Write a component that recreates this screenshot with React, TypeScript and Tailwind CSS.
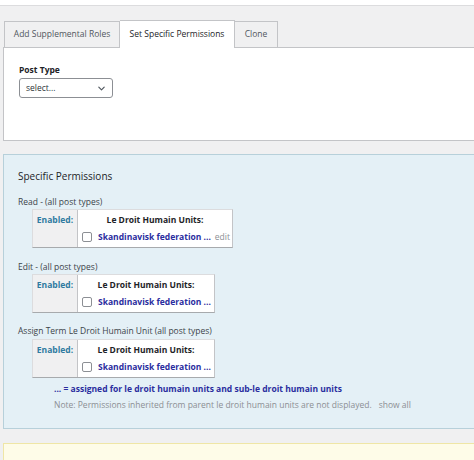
const font = { fontFamily: '"Open Sans", "Noto Sans", "Liberation Sans", sans-serif' };

function PermTable({ width, edit }: { width: string; edit?: boolean }) {
  return (
    <div
      className={`ml-[14px] flex h-[39px] ${width} border border-[#dcdcde] border-b-[#a7aaad] border-r-[#c3c4c7] bg-white`}
    >
      <div className="w-[45px] shrink-0 border-r border-[#c3c4c7] bg-[#f0f0f1] pt-[3px] text-center text-[8.5px] leading-[13px] font-bold text-[#2e7aa0]">
        Enabled:
      </div>
      <div className="flex flex-1 flex-col">
        <div className="pt-[3px] text-center text-[8.5px] leading-[13px] font-bold text-[#1d2327]">
          Le Droit Humain Units:
        </div>
        <div className="mt-[4px] flex items-center pl-[4px]">
          <span className="h-[10px] w-[10px] shrink-0 rounded-[2px] border border-[#8c8f94] bg-white" />
          <span className="ml-[6px] text-[8.5px] leading-[13px] font-bold whitespace-nowrap text-[#2a2d9e]">
            Skandinavisk federation ...
          </span>
          {edit && <span className="ml-[4px] text-[8.5px] leading-[13px] text-[#8c8f94]">edit</span>}
        </div>
      </div>
    </div>
  );
}

export default function App() {
  return (
    <div className="h-[460px] w-[474px] overflow-hidden bg-[#f0f0f1]" style={font}>
      {/* top strip */}
      <div className="h-[6px] border-b border-[#dcdcde] bg-white" />

      {/* tabs */}
      <div className="mt-[14px] flex h-[27px] items-end pl-[4px] text-[8.5px]">
        <div className="flex h-[26px] w-[116px] items-center justify-center border border-b-0 border-[#c3c4c7] bg-[#f0f0f1] text-[#50575e]">
          Add Supplemental Roles
        </div>
        <div className="relative -mb-px flex h-[28px] w-[115px] items-center justify-center border border-b-0 border-l-0 border-[#c3c4c7] bg-white text-[#1d2327]">
          Set Specific Permissions
        </div>
        <div className="flex h-[26px] w-[43px] items-center justify-center border border-b-0 border-l-0 border-[#c3c4c7] bg-[#f0f0f1] text-[#50575e]">
          Clone
        </div>
      </div>

      {/* tab panel */}
      <div className="ml-[3px] h-[94px] border border-r-0 border-[#c3c4c7] bg-white pl-[15px] pt-[15px]">
        <div className="text-[8.5px] leading-[13px] font-bold text-[#1d2327]">Post Type</div>
        <div className="mt-[2px] flex h-[20px] w-[94px] items-center justify-between rounded-[3px] border border-[#8c8f94] bg-white pl-[6px] pr-[6px] text-[8.5px] text-[#2c3338]">
          <span>select...</span>
          <svg width="9" height="9" viewBox="0 0 10 10" fill="none">
            <path d="M2 3.5 5 6.5 8 3.5" stroke="#50575e" strokeWidth="1.3" strokeLinecap="round" strokeLinejoin="round" />
          </svg>
        </div>
      </div>

      {/* specific permissions */}
      <div className="mt-[13px] ml-[3px] h-[275px] border border-r-0 border-[#b7d0da] bg-[#e4f0f6] pl-[14px] pt-[14px]">
        <div className="text-[10px] leading-[14px] text-[#1d2327]">Specific Permissions</div>

        <div className="mt-[13px] text-[8.5px] leading-[12px] text-[#3c434a]">Read - (all post types)</div>
        <div className="mt-[1px]">
          <PermTable width="w-[201px]" edit />
        </div>

        <div className="mt-[13px] text-[8.5px] leading-[12px] text-[#3c434a]">Edit - (all post types)</div>
        <div className="mt-[1px]">
          <PermTable width="w-[183px]" />
        </div>

        <div className="mt-[12px] text-[8.5px] leading-[12px] text-[#3c434a]">
          Assign Term Le Droit Humain Unit (all post types)
        </div>
        <div className="mt-[2px]">
          <PermTable width="w-[183px]" />
        </div>

        <div className="mt-[5px] pl-[36px] text-[8.5px] leading-[12px] font-bold text-[#2a2d9e]">
          ... = assigned for le droit humain units and sub-le droit humain units
        </div>
        <div className="mt-[4px] flex pl-[36px] text-[8.5px] leading-[12px] text-[#8c8f94]">
          <span>Note: Permissions inherited from parent le droit humain units are not displayed.</span>
          <span className="ml-[7px]">show all</span>
        </div>
      </div>

      {/* notice */}
      <div className="mt-[14px] ml-[3px] h-[40px] border-t border-l border-[#efe6a6] bg-[#fefce8]" />
    </div>
  );
}
